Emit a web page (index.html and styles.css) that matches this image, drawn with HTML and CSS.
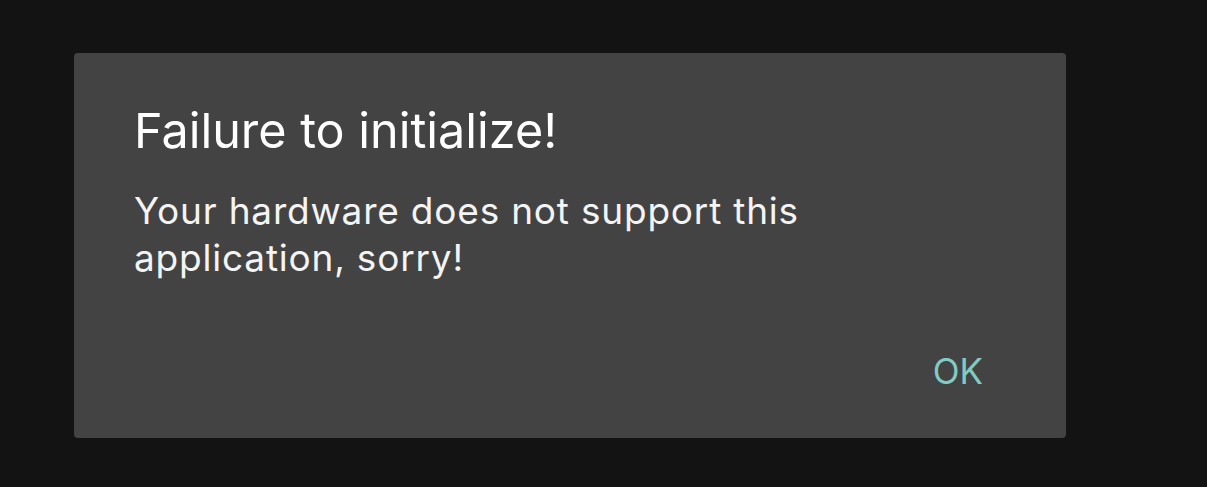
FILE: index.html
```html
<!DOCTYPE html>
<html>
<head>
<meta charset="utf-8">
<link rel="stylesheet" href="styles.css">
</head>
<body>
<div class="screen">
  <div class="dialog">
    <h1 class="title">Failure to initialize!</h1>
    <p class="message">Your hardware does not support this<br>application, sorry!</p>
    <div class="actions">
      <span class="btn">OK</span>
    </div>
  </div>
</div>
</body>
</html>
```
FILE: styles.css
```css
html, body {
  margin: 0;
  padding: 0;
  background: #131313;
  width: 1207px;
  height: 487px;
  overflow: hidden;
}
.screen {
  padding: 53px 0 0 74px;
  font-family: Inter, "Noto Sans", sans-serif;
}
.dialog {
  width: 992px;
  height: 385px;
  box-sizing: border-box;
  background: #434343;
  border-radius: 4px;
  padding: 0 83px 0 60px;
  display: flex;
  flex-direction: column;
}
.title {
  margin: 48px 0 0 0;
  font-size: 48.5px;
  font-weight: 400;
  line-height: 60px;
  color: #ffffff;
}
.message {
  margin: 26px 0 0 0;
  font-size: 37px;
  letter-spacing: 0.8px;
  line-height: 47px;
  color: #f4f4f4;
}
.actions {
  margin-top: auto;
  margin-bottom: 47px;
  display: flex;
  justify-content: flex-end;
}
.btn {
  font-size: 35px;
  line-height: 40px;
  color: #80cbc4;
}
```
